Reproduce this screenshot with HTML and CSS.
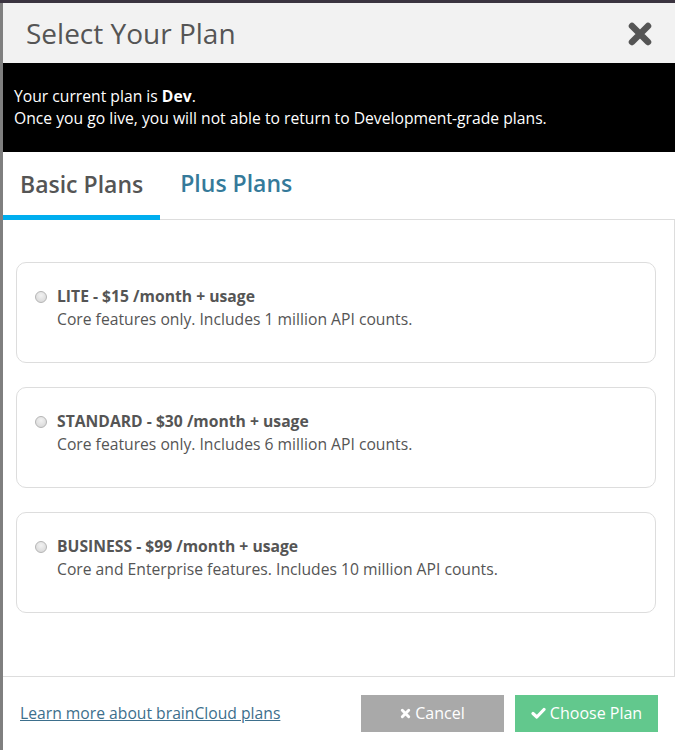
FILE: index.html
```html
<!DOCTYPE html>
<html>
<head>
<meta charset="utf-8">
<link rel="stylesheet" href="styles.css">
</head>
<body>
<div class="modal">
  <div class="header">
    <h1 class="title">Select Your Plan</h1>
    <svg class="close" width="24" height="24" viewBox="0 0 24 24"><path d="M4 4 L20 20 M20 4 L4 20" stroke="#555" stroke-width="6.5" stroke-linecap="round"/></svg>
  </div>
  <div class="notice">
    <p>Your current plan is <b>Dev</b>.</p>
    <p>Once you go live, you will not able to return to Development-grade plans.</p>
  </div>
  <div class="tabs">
    <div class="tab active">Basic Plans</div>
    <div class="tab">Plus Plans</div>
  </div>
  <div class="panel">
    <div class="card">
      <span class="radio"></span>
      <div class="card-text">
        <div class="plan-name">LITE - $15 /month + usage</div>
        <div class="plan-desc">Core features only. Includes 1 million API counts.</div>
      </div>
    </div>
    <div class="card">
      <span class="radio"></span>
      <div class="card-text">
        <div class="plan-name">STANDARD - $30 /month + usage</div>
        <div class="plan-desc">Core features only. Includes 6 million API counts.</div>
      </div>
    </div>
    <div class="card">
      <span class="radio"></span>
      <div class="card-text">
        <div class="plan-name">BUSINESS - $99 /month + usage</div>
        <div class="plan-desc">Core and Enterprise features. Includes 10 million API counts.</div>
      </div>
    </div>
  </div>
  <div class="footer">
    <a class="learn" href="#">Learn more about brainCloud plans</a>
    <div class="buttons">
      <button class="btn btn-cancel"><svg class="ico" width="11" height="11" viewBox="0 0 12 12"><path d="M2.5 2.5 L9.5 9.5 M9.5 2.5 L2.5 9.5" stroke="#fff" stroke-width="3.2" stroke-linecap="round"/></svg>Cancel</button>
      <button class="btn btn-choose"><svg class="ico" width="15" height="12" viewBox="0 0 15 12"><path d="M2 6.5 L5.8 10 L13 2.5" stroke="#fff" stroke-width="3.2" fill="none" stroke-linecap="round" stroke-linejoin="round"/></svg>Choose Plan</button>
    </div>
  </div>
</div>
</body>
</html>
```
FILE: styles.css
```css
html, body {
  margin: 0;
  padding: 0;
}
body {
  background: #7f7f7f;
  border-top: 3px solid #3b3440;
  height: 747px;
  overflow: hidden;
  font-family: "Open Sans", "DejaVu Sans", sans-serif;
  color: #555;
}
.modal {
  margin-left: 3px;
  background: #fff;
  height: 747px;
}
.header {
  height: 60px;
  background: #f2f2f2;
  display: flex;
  align-items: center;
  justify-content: space-between;
  padding: 0 23px 0 23px;
}
.title {
  margin: 0;
  font-size: 28px;
  font-weight: 400;
  color: #555;
}
.close {
  display: block;
  margin-top: 1px;
}
.notice {
  background: #000;
  color: #fff;
  height: 89px;
  box-sizing: border-box;
  padding: 22px 11px 0;
  font-size: 15.7px;
  line-height: 22px;
}
.notice p {
  margin: 0;
}
.tabs {
  display: flex;
  height: 67px;
  border-bottom: 1px solid #ddd;
}
.tab {
  padding: 0 17px 0 20px;
  display: flex;
  align-items: center;
  font-size: 23px;
  font-weight: 600;
  color: #357a9a;
  height: 62px;
}
.tab.active {
  padding: 0 17px;
  color: #555;
  border-bottom: 5px solid #00aeef;
  margin-bottom: -1px;
  height: 63px;
}
.panel {
  border-right: 1px solid #ddd;
  border-bottom: 1px solid #ddd;
  height: 457px;
  box-sizing: border-box;
  padding: 42px 18px 0 13px;
  display: flex;
  flex-direction: column;
  gap: 24px;
}
.card {
  height: 101px;
  box-sizing: border-box;
  border: 1px solid #ddd;
  border-radius: 10px;
  display: flex;
  align-items: flex-start;
  padding: 22px 18px 0;
}
.radio {
  flex: none;
  width: 10px;
  height: 10px;
  border-radius: 50%;
  border: 1px solid #b5b5b5;
  background: radial-gradient(circle at 50% 35%, #f2f2f2, #d4d4d4);
  margin-top: 6px;
  margin-right: 10px;
}
.plan-name {
  font-size: 15.7px;
  font-weight: 700;
  line-height: 23px;
  color: #555;
}
.plan-desc {
  font-size: 15.7px;
  line-height: 23px;
  color: #555;
}
.footer {
  height: 72px;
  display: flex;
  align-items: center;
  justify-content: space-between;
  padding: 0 17px 0 17px;
}
.learn {
  font-size: 15.7px;
  color: #3d6f8c;
  text-decoration: underline;
}
.buttons {
  display: flex;
  gap: 11px;
}
.btn {
  width: 143px;
  height: 37px;
  border: none;
  color: #fff;
  font-family: "Open Sans", "DejaVu Sans", sans-serif;
  font-size: 16px;
  display: flex;
  align-items: center;
  justify-content: center;
  gap: 4px;
  padding: 0;
}
.btn-cancel {
  background: #a9a9a9;
}
.btn-choose {
  background: #62c88d;
}
.ico {
  display: block;
}
```
